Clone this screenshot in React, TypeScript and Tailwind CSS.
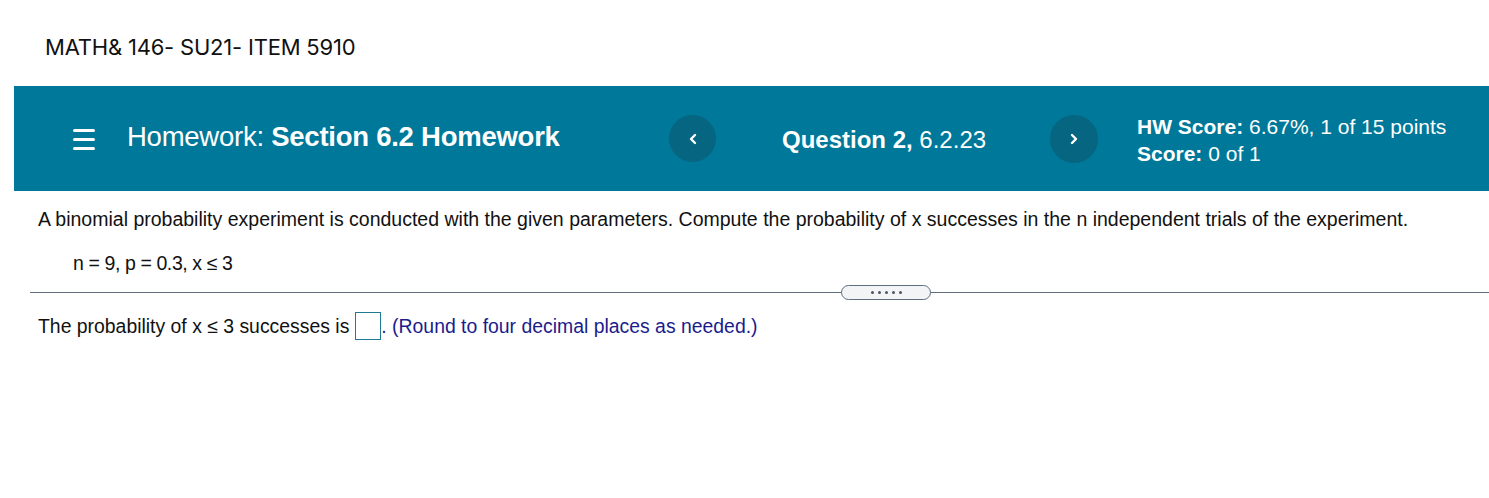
import React from "react";

export default function App() {
  const arial = { fontFamily: '"Liberation Sans", Arial, sans-serif' };
  return (
    <div className="w-[1489px] h-[498px] bg-white overflow-hidden" style={arial}>
      <div className="h-[86px] pl-[45px] pt-[33px]">
        <div className="text-[22px] leading-[28px] text-[#111] tracking-[-0.2px]" style={{ fontFamily: 'Inter, "Noto Sans", sans-serif' }}>
          MATH&amp; 146- SU21- ITEM 5910
        </div>
      </div>
      <div className="ml-[14px] h-[105px] bg-[#007899] flex items-center text-white">
        <div className="ml-[59px] w-[22px] flex flex-col gap-[6px] mt-[1px]">
          <span className="block h-[3px] rounded-full bg-white" />
          <span className="block h-[3px] rounded-full bg-white" />
          <span className="block h-[3px] rounded-full bg-white" />
        </div>
        <div className="ml-[32px] w-[542px] text-[27.5px] leading-[30px] tracking-[-0.25px] -mt-[3px] whitespace-nowrap">
          Homework: <span className="font-bold">Section 6.2 Homework</span>
        </div>
        <button className="w-[47px] h-[47px] rounded-full bg-[#066580] flex items-center justify-center">
          <svg width="10" height="12" viewBox="0 0 10 12">
            <path d="M7 2 L3 6 L7 10" stroke="white" strokeWidth="2.4" fill="none" strokeLinecap="round" strokeLinejoin="round" />
          </svg>
        </button>
        <div className="ml-[66px] w-[268px] text-[24px] leading-[30px] whitespace-nowrap mt-[2px]">
          <span className="font-bold">Question 2,</span> 6.2.23
        </div>
        <button className="w-[48px] h-[48px] rounded-full bg-[#066580] flex items-center justify-center">
          <svg width="10" height="12" viewBox="0 0 10 12">
            <path d="M3 2 L7 6 L3 10" stroke="white" strokeWidth="2.4" fill="none" strokeLinecap="round" strokeLinejoin="round" />
          </svg>
        </button>
        <div className="ml-[39px] text-[21px] leading-[27px] whitespace-nowrap mt-[3px]">
          <div><span className="font-bold">HW Score:</span> 6.67%, 1 of 15 points</div>
          <div><span className="font-bold">Score:</span> 0 of 1</div>
        </div>
      </div>
      <div className="pl-[38px] pt-[17px] text-[19.5px] leading-[22px] text-[#111]">
        <p>A binomial probability experiment is conducted with the given parameters. Compute the probability of x successes in the n independent trials of the experiment.</p>
        <p className="pl-[35px] mt-[22px] tracking-[-0.4px]">n = 9, p = 0.3, x ≤ 3</p>
      </div>
      <div className="ml-[30px] mt-[11px] relative h-[14px] flex items-center">
        <div className="w-full h-[1px] bg-[#5f6f7f]" />
        <div className="absolute left-[811px] top-0 w-[90px] h-[15px] rounded-full border border-[#5f6f7f] bg-[#f3f4f6] flex items-center justify-center gap-[4px]">
          {[0, 1, 2, 3, 4].map((i) => (
            <span key={i} className="block w-[3px] h-[3px] rounded-full bg-[#4b5563]" />
          ))}
        </div>
      </div>
      <div className="pl-[38px] mt-[13px] text-[19.4px] leading-[28px] text-[#111] flex items-center whitespace-nowrap">
        <span>The probability of x ≤ 3 successes is</span>
        <span className="inline-block ml-[6px] w-[26px] h-[28px] border border-[#1f7a95] bg-white" />
        <span className="text-[#1c1c8c]">. (Round to four decimal places as needed.)</span>
      </div>
    </div>
  );
}
